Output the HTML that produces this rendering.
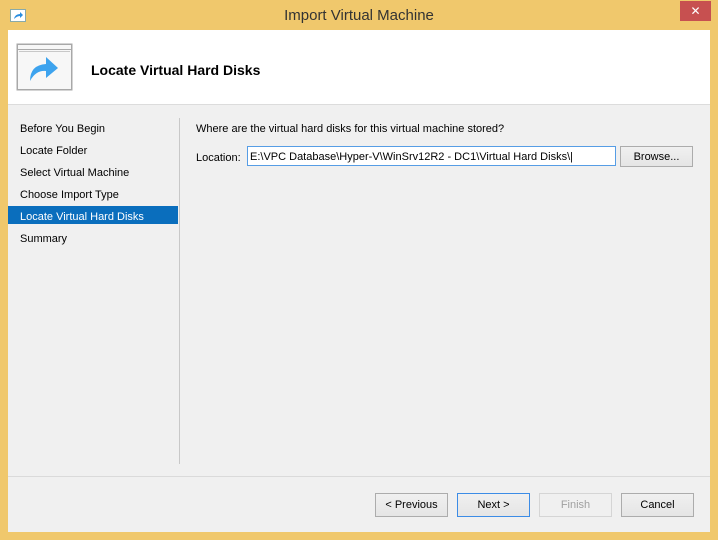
<!DOCTYPE html>
<html><head><meta charset="utf-8"><style>
*{margin:0;padding:0;box-sizing:border-box}
body{width:718px;height:540px;background:#f0c86c;font-family:"Liberation Sans",sans-serif;font-size:11px;color:#000;position:relative;overflow:hidden}
.a{position:absolute}
.win{left:8px;top:30px;width:702px;height:502px;background:#f0f0f0}
.hdr{left:8px;top:30px;width:702px;height:75px;background:#fff;border-bottom:1px solid #dcdcdc}
.title{left:0;top:7px;width:718px;text-align:center;font-size:15px;color:#333}
.close{left:680px;top:1px;width:31px;height:20px;background:#c75050;color:#fff;text-align:center;font-size:12px;line-height:20px}
.nav{left:20px;font-size:11px}
.sel{left:8px;top:206px;width:170px;height:18px;background:#0a6ebd}
.btn{height:24px;top:493px;border:1px solid #acacac;background:linear-gradient(#f0f0f0,#e5e5e5);text-align:center;line-height:23px;font-size:11px}
</style></head><body>
<div class="a win"></div>
<div class="a hdr"></div>
<svg class="a" style="left:10px;top:9px" width="16" height="13"><rect x=".5" y=".5" width="15" height="12" fill="#fff" stroke="#8aa"/><path d="M4 10 Q5 5 10 5 L10 3 L13 6 L10 9 L10 7 Q7 7 4 10Z" fill="#2a8ee0"/></svg>
<div class="a title">Import Virtual Machine</div>
<div class="a close">✕</div>
<svg class="a" style="left:16px;top:43px" width="57" height="48"><rect x=".5" y=".5" width="56" height="47" fill="#a8a8a8"/><rect x="2" y="2" width="53" height="44" fill="#f7f7f7"/><rect x="2" y="6" width="53" height="1" fill="#aaa"/><rect x="3" y="8" width="51" height="1" fill="#c8c8c8"/><path d="M14 38 Q14 22 30 21 L30 14 L42 25 L30 35 L30 28 Q20 27 14 38Z" fill="#3da3ee"/></svg>
<div class="a" style="left:91px;top:62px;font-size:14px;font-weight:bold">Locate Virtual Hard Disks</div>
<div class="a sel"></div>
<div class="a nav" style="top:123px">Before You Begin</div>
<div class="a nav" style="top:145px">Locate Folder</div>
<div class="a nav" style="top:167px">Select Virtual Machine</div>
<div class="a nav" style="top:189px">Choose Import Type</div>
<div class="a nav" style="top:211px;color:#fff">Locate Virtual Hard Disks</div>
<div class="a nav" style="top:233px">Summary</div>
<div class="a" style="left:179px;top:118px;width:1px;height:346px;background:#c8c8c8"></div>
<div class="a" style="left:196px;top:123px">Where are the virtual hard disks for this virtual machine stored?</div>
<div class="a" style="left:196px;top:152px">Location:</div>
<div class="a" style="left:247px;top:146px;width:369px;height:20px;background:#fff;border:1px solid #569de5;padding:4px 2px;white-space:nowrap">E:\VPC Database\Hyper-V\WinSrv12R2 - DC1\Virtual Hard Disks\|</div>
<div class="a btn" style="left:620px;top:146px;width:73px;height:21px;line-height:20px">Browse...</div>
<div class="a" style="left:8px;top:476px;width:702px;height:1px;background:#dadada"></div>
<div class="a btn" style="left:375px;width:73px">&lt; Previous</div>
<div class="a btn" style="left:457px;width:73px;border-color:#3c8ce6">Next &gt;</div>
<div class="a btn" style="left:539px;width:73px;border-color:#d5d5d5;background:#f0f0f0;color:#a0a0a0">Finish</div>
<div class="a btn" style="left:621px;width:73px">Cancel</div>
</body></html>
